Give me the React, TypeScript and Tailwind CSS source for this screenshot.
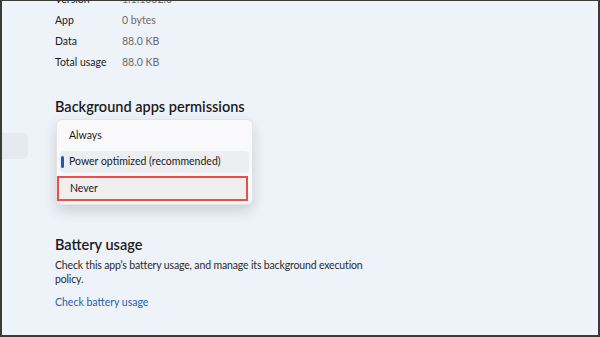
import React from 'react'

const font = { fontFamily: 'Lato, "Noto Sans", sans-serif' }

const usage = [
  { label: 'App', value: '0 bytes' },
  { label: 'Data', value: '88.0 KB' },
  { label: 'Total usage', value: '88.0 KB' },
]

const options = ['Always', 'Power optimized (recommended)', 'Never']

export default function App() {
  return (
    <div
      className="relative w-[600px] h-[337px] overflow-hidden bg-[#eef2f9] border-t border-l-2 border-r-2 border-b-2 border-[#3a3a3a] text-[#1b1b1b]"
      style={font}
    >
      {/* selected nav item peeking at left */}
      <div className="absolute left-0 top-[132px] w-[26px] h-[26px] rounded-r-md bg-[#e6e9ef]" />

      <div className="pl-[53px] -mt-[12px]">
        {/* storage rows */}
        <div className="flex flex-col text-[10.5px] leading-[21px]">
          <div className="flex">
            <span className="w-[67px]">Version</span>
            <span className="text-[#6b6b6b]">1.1.1032.0</span>
          </div>
          {usage.map((row) => (
            <div key={row.label} className="flex">
              <span className="w-[67px]">{row.label}</span>
              <span className="text-[#6b6b6b]">{row.value}</span>
            </div>
          ))}
        </div>

        <h2 className="mt-[24px] text-[14.5px] font-semibold leading-[20px]">Background apps permissions</h2>

        {/* space kept under the open menu */}
        <div className="h-[97px]" />

        <h2 className="mt-[21px] text-[14.5px] font-semibold leading-[20px]">Battery usage</h2>
        <p className="mt-[3px] w-[322px] text-[10.5px] leading-[14px] tracking-[-0.15px] text-[#2b2b2b]">
          Check this app’s battery usage, and manage its background execution policy.
        </p>
        <a className="block mt-[9px] text-[10.5px] text-[#1f5fae]">Check battery usage</a>
      </div>

      {/* open dropdown menu */}
      <div className="absolute left-[54px] top-[118px] w-[197px] rounded-md bg-[#f9f9fb] border border-[#e3e3e3] shadow-[0_6px_14px_rgba(0,0,0,0.14)] p-[3px] text-[10.5px]">
        <div className="h-[25px] flex items-center pl-[9px]">{options[0]}</div>
        <div className="relative h-[22px] mt-[3px] flex items-center pl-[9px] rounded bg-[#eceef1]">
          <span className="absolute left-[1px] top-[5px] w-[3px] h-[12px] rounded bg-[#0f5fc1]" />
          {options[1]}
        </div>
        <div className="h-[25px] mt-[3px] -ml-[3px] w-[191px] flex items-center pl-[11px] bg-[#efefef] border-2 border-solid border-[#ea5048]">
          {options[2]}
        </div>
      </div>
    </div>
  )
}
